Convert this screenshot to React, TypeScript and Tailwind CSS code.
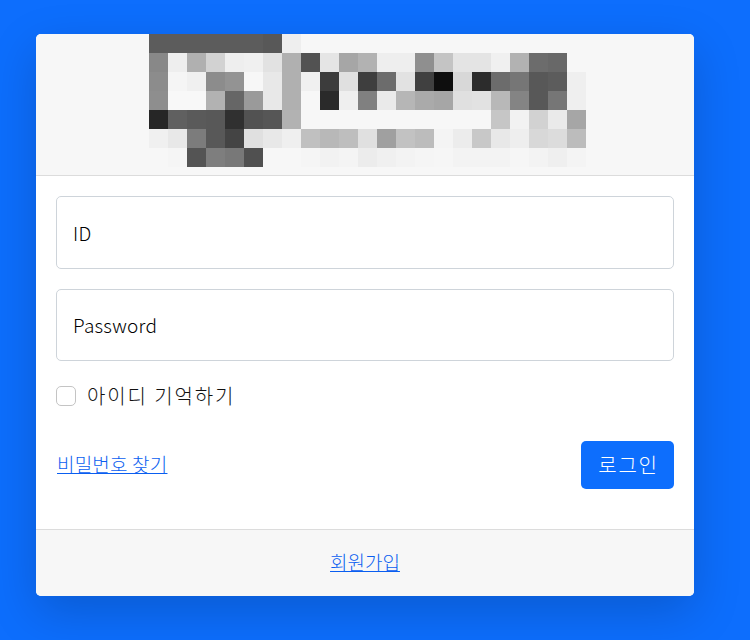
const rows = [
  "5c 5c 5c 5c 5c 5c 58 ee f7 f7 f7 f7 f7 f7 f7 f7 f7 f7 f7 f7 f7 f7 f7",
  "88 ee b0 d2 ee f0 e2 b0 52 e5 a6 b2 ee ee 8f c4 e4 e4 f0 b2 6c 68 f7",
  "8c f5 f0 8c 93 f7 e8 b0 f0 3c e0 3e 6c e2 40 0e d8 2c 6c 76 58 5c ef",
  "8e f8 f8 b2 66 9a e8 b0 f7 2a ef 80 ea b6 aa a6 e0 e2 b8 84 58 76 ef",
  "26 60 5a 58 30 52 56 b2 f7 f7 f7 f7 f7 f7 f7 f7 f7 f7 c6 f2 d2 ea a6",
  "f0 e8 7c 58 44 e0 e8 ef c0 b8 be e0 a0 c2 bc f4 ec c8 e8 ee d8 dc bc",
  "f7 f5 54 7e 78 50 f7 f7 f5 f2 f4 ec f0 f3 f5 f6 f3 f3 f3 f6 f3 ef f4",
].map((r) => r.split(" "));

function Logo() {
  return (
    <svg width="437" height="133" viewBox="0 0 437 133" className="block" shapeRendering="crispEdges" aria-label="logo">
      {rows.map((r, y) =>
        r.map((c, x) => <rect key={`${x}-${y}`} x={x * 19} y={y * 19} width="19" height="19" fill={`#${c}${c}${c}`} />)
      )}
    </svg>
  );
}

export default function App() {
  return (
    <div
      className="w-[750px] h-[640px] overflow-hidden bg-[#0d6efd] pt-[34px] pl-[36px] text-[#212529] text-base font-light"
      style={{ fontFamily: '"Noto Sans CJK KR", "Noto Sans", sans-serif' }}
    >
      <div className="w-[658px] h-[562px] flex flex-col bg-white rounded-[5px] overflow-hidden shadow-[0_16px_48px_rgba(0,0,0,0.175)]">
        <div className="h-[142px] shrink-0 bg-[#f7f7f7] border-b border-[#dcdcdc] pl-[113px]">
          <Logo />
        </div>
        <div className="flex-1 px-5 pt-5 flex flex-col">
          <div className="h-[73px] shrink-0 border border-[#ced4da] rounded-[5px] pl-4 pt-[24px] leading-[24px] text-[19px] tracking-[0.25px] text-black">ID</div>
          <div className="mt-5 h-[72px] shrink-0 border border-[#ced4da] rounded-[5px] pl-4 pt-[23px] leading-[24px] text-[19px] tracking-[0.25px] text-black">Password</div>
          <label className="mt-[25px] flex items-center h-5">
            <span className="w-5 h-5 border border-[#c4c4c4] rounded-[5px] bg-white" />
            <span className="ml-[11px] text-[20px] leading-5 tracking-[1.9px] text-[#111111]">아이디 기억하기</span>
          </label>
          <div className="mt-[35px] flex items-center justify-between">
            <a href="#" className="ml-px text-[#0a5ef0] underline text-[19px] leading-6 tracking-[0.2px] -translate-y-px">비밀번호 찾기</a>
            <button className="w-[93px] h-[48px] pl-[2px] rounded-[5px] bg-[#0d6efd] text-white text-[20px] tracking-[1.8px]">로그인</button>
          </div>
        </div>
        <div className="h-[67px] shrink-0 bg-[#f7f7f7] border-t border-[#dcdcdc] flex items-center justify-center">
          <a href="#" className="text-[#0a5ef0] underline text-[19px] leading-6 -translate-y-px">회원가입</a>
        </div>
      </div>
    </div>
  );
}
